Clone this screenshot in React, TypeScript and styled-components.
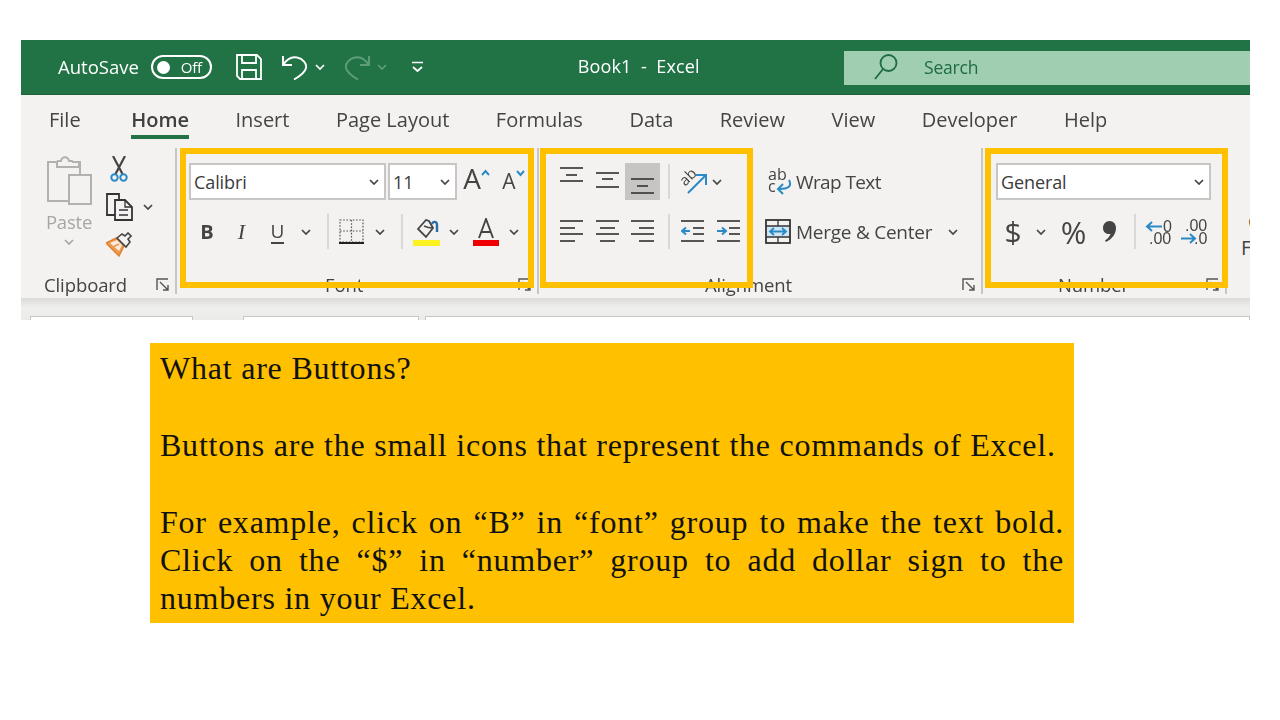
import React from "react";
import styled, { createGlobalStyle } from "styled-components";

const GlobalStyle = createGlobalStyle`
  html, body { margin: 0; padding: 0; background: #fff; }
  body { font-family: "Open Sans", "Liberation Sans", sans-serif; }
`;

const Page = styled.div`
  width: 1280px;
  height: 720px;
  padding: 40px 0 0 21px;
  box-sizing: border-box;
  overflow: hidden;
`;

const Ribbon = styled.div`
  width: 1229px;
  height: 280px;
  display: flex;
  flex-direction: column;
  background: #f3f2f1;
  color: #444;
`;

const TitleBar = styled.div`
  height: 55px;
  flex: none;
  display: flex;
  align-items: center;
  background: #217346;
  color: #fff;
  border-bottom: 1px solid #1b623b;
  box-sizing: border-box;
  filter: blur(0.3px);
`;

const AutoSave = styled.span`
  margin: 0 0 2px 37px;
  font-size: 18.5px;
`;

const Toggle = styled.span`
  margin-left: 12px;
  width: 61px;
  height: 24px;
  box-sizing: border-box;
  border: 2px solid #fff;
  border-radius: 12px;
  display: flex;
  align-items: center;
  font-size: 15px;
  letter-spacing: -0.3px;
  padding-left: 4px;
  gap: 11px;
  &::before {
    content: "";
    width: 13px;
    height: 13px;
    border-radius: 50%;
    background: #fff;
  }
`;

const Slot = styled.span<{ $ml?: number; $w?: number; $bg?: string }>`
  margin-left: ${(p) => p.$ml ?? 0}px;
  ${(p) => (p.$w ? `width: ${p.$w}px;` : "")}
  ${(p) => (p.$bg ? `background: ${p.$bg};` : "")}
  flex: none;
  display: flex;
  align-items: center;
  justify-content: center;
  align-self: stretch;
`;

const BookTitle = styled.span`
  margin: 0 0 2px 154px;
  width: 124px;
  font-size: 18px;
  white-space: pre;
  letter-spacing: 0.1px;
`;

const SearchBox = styled.div`
  margin-left: auto;
  width: 406px;
  height: 34px;
  margin-top: 2px;
  background: #9fceb0;
  color: #1f6b42;
  display: flex;
  align-items: center;
  font-size: 17.5px;
  letter-spacing: -0.2px;
  padding: 0 0 2px 30px;
  box-sizing: border-box;
  gap: 26px;
`;

const TabBar = styled.div`
  height: 50px;
  flex: none;
  display: flex;
  align-items: center;
  padding: 0 0 2px 28px;
  box-sizing: border-box;
  gap: 46.5px;
  font-size: 20px;
  color: #444;
  filter: blur(0.3px);
`;

const Tab = styled.span<{ $active?: boolean }>`
  position: relative;
  ${(p) => (p.$active ? "font-weight: 600; color: #3f3f3f; margin-left: 4px;" : "")}
  ${(p) =>
    p.$active
      ? `&::after {
          content: "";
          position: absolute;
          left: 0;
          right: 0;
          bottom: -6px;
          height: 4px;
          background: #217346;
        }`
      : ""}
`;

const Tools = styled.div`
  height: 153px;
  flex: none;
  display: flex;
  align-items: flex-start;
  padding-top: 3px;
  box-sizing: border-box;
`;

const Group = styled.div<{ $w: number; $pt?: number }>`
  position: relative;
  width: ${(p) => p.$w}px;
  height: 146px;
  flex: none;
  box-sizing: border-box;
  padding-top: ${(p) => p.$pt ?? 15}px;
  border-right: 2px solid #c8c6c4;
  display: flex;
  flex-direction: column;
`;

const Stub = styled.div`
  flex: 1;
  height: 146px;
  padding-top: 61px;
  box-sizing: border-box;
  font-size: 20px;
  line-height: 26px;
  overflow: hidden;
  color: #444;
`;

const StubLine = styled.div<{ $ml: number }>`
  margin-left: ${(p) => p.$ml}px;
`;

const Controls = styled.div`
  flex: 1;
  display: flex;
  flex-direction: column;
  gap: 13px;
  filter: blur(0.3px);
`;

const ToolRow = styled.div`
  height: 37px;
  display: flex;
  align-items: stretch;
`;

const Select = styled.div<{ $ml: number; $w: number }>`
  margin-left: ${(p) => p.$ml}px;
  width: ${(p) => p.$w}px;
  flex: none;
  box-sizing: border-box;
  background: #fff;
  border: 2px solid #c8c6c4;
  display: flex;
  align-items: center;
  justify-content: space-between;
  padding: 0 5px 0 3px;
  font-size: 18px;
  letter-spacing: -0.1px;
  color: #3b3b3b;
`;

const Separator = styled.span<{ $ml: number }>`
  margin: 1px 0 1px ${(p) => p.$ml}px;
  width: 2px;
  flex: none;
  background: #dad8d6;
`;

const BigGlyph = styled.span<{
  $size: number;
  $weight?: number;
  $italic?: boolean;
  $serif?: boolean;
  $under?: boolean;
  $lift?: number;
}>`
  font-size: ${(p) => p.$size}px;
  font-weight: ${(p) => p.$weight ?? 400};
  font-style: ${(p) => (p.$italic ? "italic" : "normal")};
  font-family: ${(p) => (p.$serif ? '"Liberation Serif", serif' : "inherit")};
  margin-bottom: ${(p) => p.$lift ?? 0}px;
  ${(p) => (p.$under ? "border-bottom: 2px solid #444; line-height: 22px;" : "")}
  color: #444;
`;

const ButtonText = styled.span<{ $ml: number; $ls?: number }>`
  margin-left: ${(p) => p.$ml}px;
  flex: none;
  display: flex;
  align-items: center;
  font-size: 19px;
  letter-spacing: ${(p) => p.$ls ?? -0.25}px;
  white-space: nowrap;
`;

const LabelRow = styled.div<{ $pl: number }>`
  height: 20px;
  flex: none;
  display: flex;
  align-items: center;
  justify-content: space-between;
  padding: 0 5px 0 ${(p) => p.$pl}px;
  font-size: 18.5px;
  letter-spacing: -0.1px;
  color: #444;
  filter: blur(0.3px);
`;

const Frame = styled.div<{ $left: number; $w: number }>`
  position: absolute;
  left: ${(p) => p.$left}px;
  top: 0;
  width: ${(p) => p.$w}px;
  height: 140px;
  box-sizing: border-box;
  border: 6px solid #ffc000;
  z-index: 2;
`;

const PasteRow = styled.div`
  flex: 1;
  display: flex;
  align-items: flex-start;
  filter: blur(0.3px);
`;

const PasteColumn = styled.div`
  margin-left: 23px;
  width: 50px;
  display: flex;
  flex-direction: column;
  align-items: center;
  color: #a8a6a4;
  font-size: 18.5px;
  letter-spacing: -0.2px;
  line-height: 22px;
  gap: 6px;
`;

const SmallColumn = styled.div`
  margin-left: 12px;
  display: flex;
  flex-direction: column;
  gap: 11px;
`;

const SmallRow = styled.div`
  display: flex;
  align-items: center;
  gap: 10px;
`;

const Band = styled.div`
  flex: 1;
  display: flex;
  align-items: flex-end;
  padding-left: 9px;
  background: linear-gradient(#dcdbda, #efefee 45%, #ebebea);
`;

const SheetCell = styled.div<{ $ml: number; $w?: number }>`
  margin-left: ${(p) => p.$ml}px;
  ${(p) => (p.$w ? `width: ${p.$w}px;` : "flex: 1;")}
  height: 4px;
  box-sizing: border-box;
  background: #fff;
  border: 1px solid #c8c6c4;
  border-bottom: 0;
`;

const Callout = styled.div`
  margin: 23px 0 0 129px;
  width: 924px;
  height: 280px;
  box-sizing: border-box;
  padding: 6px 10px;
  background: #ffc000;
  color: #111;
  font-family: "Liberation Serif", serif;
  font-size: 32px;
  letter-spacing: 0.78px;
  line-height: 38.4px;
`;

const Para = styled.p<{ $justify?: boolean }>`
  margin: 0 0 38.4px;
  text-align: ${(p) => (p.$justify ? "justify" : "left")};
`;

const IconSvg = styled.svg`
  overflow: visible;
  flex: none;
`;

const Chevron = ({ color = "#444" }: { color?: string }) => (
  <svg width="10" height="6" viewBox="0 0 10 6">
    <path d="M1 1l4 4 4-4" fill="none" stroke={color} strokeWidth="1.7" />
  </svg>
);

const Launcher = () => (
  <svg width="14" height="13" viewBox="0 0 14 13" fill="none" stroke="#555" strokeWidth="1.4">
    <path d="M12 1H1v11" />
    <path d="M4 4l8 8M12 7v5H7" />
  </svg>
);

// horizontal text-align glyphs, each line is [x1, x2, y]
const AlignLines = ({ lines }: { lines: number[][] }) => (
  <svg width="23" height="37" viewBox="0 0 23 37">
    {lines.map((l, i) => (
      <line key={i} x1={l[0]} x2={l[1]} y1={l[2]} y2={l[2]} stroke="#444" strokeWidth="1.8" />
    ))}
  </svg>
);

const IndentIcon = ({ flip }: { flip?: boolean }) => (
  <svg width="23" height="37" viewBox="0 0 23 37">
    <g stroke="#444" strokeWidth="1.8">
      <line x1="0" x2="23" y1="8" y2="8" />
      <line x1="12" x2="23" y1="15" y2="15" />
      <line x1="12" x2="23" y1="21" y2="21" />
      <line x1="0" x2="23" y1="28" y2="28" />
    </g>
    {flip ? (
      <path d="M0 18h8M5 14.5L9 18l-4 3.5" fill="none" stroke="#2b8ac6" strokeWidth="2" />
    ) : (
      <path d="M9 18H1M5 14.5L1 18l4 3.5" fill="none" stroke="#2b8ac6" strokeWidth="2" />
    )}
  </svg>
);

const DecimalIcon = ({ more }: { more?: boolean }) => (
  <IconSvg width="26" height="30" viewBox="0 0 26 30" fontFamily="'Liberation Sans', sans-serif" fontSize="16" fill="#444">
    {more ? (
      <>
        <text x="4" y="13.5">.00</text>
        <text x="13" y="26.5">.0</text>
        <path d="M0 21.5h14M9 17l5 4.5-5 4.5" fill="none" stroke="#2b8ac6" strokeWidth="2" />
      </>
    ) : (
      <>
        <text x="17" y="14.5">0</text>
        <text x="3" y="26.5">.00</text>
        <path d="M16 9.5H1M6 5L1 9.5 6 14" fill="none" stroke="#2b8ac6" strokeWidth="2" />
      </>
    )}
  </IconSvg>
);

const SaveIcon = () => (
  <svg width="26" height="26" viewBox="0 0 26 26" fill="none" stroke="#fff" strokeWidth="1.8">
    <path d="M1 1h20l4 4v20H4l-3-3z" />
    <path d="M6 1v8h14V1M6 25v-9h14v9" />
  </svg>
);

const UndoIcon = () => (
  <svg width="26" height="26" viewBox="0 0 26 26" fill="none" stroke="#fff" strokeWidth="1.9">
    <path d="M1 2v9h9" />
    <path d="M1.5 10.5C5 5 10 2.5 15 3.5c6 1.2 10 6 9 10.5-.8 4-5 7.5-12 11.5" />
  </svg>
);

const RedoIcon = () => (
  <svg width="26" height="26" viewBox="0 0 26 26" fill="none" stroke="#5d9d7b" strokeWidth="1.9">
    <path d="M25 2v9h-9" />
    <path d="M24.5 10.5C21 5 16 2.5 11 3.5c-6 1.2-10 6-9 10.5.8 4 5 7.5 12 11.5" />
  </svg>
);

const CustomizeIcon = () => (
  <svg width="13" height="12" viewBox="0 0 13 12" fill="none" stroke="#fff" strokeWidth="1.7">
    <path d="M1 1.5h11M2 6l4.5 4L11 6" />
  </svg>
);

const SearchIcon = () => (
  <svg width="24" height="26" viewBox="0 0 24 26" fill="none" stroke="#1f6b42" strokeWidth="1.8">
    <circle cx="14.5" cy="9" r="8" />
    <path d="M9 15L1 25" />
  </svg>
);

const ClipboardIcon = () => (
  <svg width="45" height="49" viewBox="0 0 45 49" fill="none" stroke="#b3b1af" strokeWidth="2">
    <path d="M22 45H1V6h9l1-1h3c1-5 7-5 8 0h3l1 1h7v13" />
    <path d="M10 6v5h22V6" />
    <rect x="22" y="19" width="22" height="29" fill="#f3f2f1" />
  </svg>
);

const ScissorsIcon = () => (
  <svg width="18" height="26" viewBox="0 0 18 26" fill="none">
    <path d="M3 0l9.5 18M15 0L5.5 18" stroke="#444" strokeWidth="2.2" />
    <circle cx="4.5" cy="21.5" r="3.2" stroke="#2b8ac6" strokeWidth="2" />
    <circle cx="13.5" cy="21.5" r="3.2" stroke="#2b8ac6" strokeWidth="2" />
  </svg>
);

const CopyIcon = () => (
  <svg width="27" height="28" viewBox="0 0 27 28" fill="none" stroke="#333" strokeWidth="1.8">
    <path d="M9 22H1V1h12v6" />
    <path d="M9 7h10l7 7v13H9z" fill="#f3f2f1" />
    <path d="M19 7v7h7M13 17h9M13 22h9" strokeWidth="1.3" />
  </svg>
);

const BrushIcon = () => (
  <svg width="26" height="25" viewBox="0 0 26 25">
    <path d="M0 11l10-5 8 8-5 10z" fill="#ec9a4e" stroke="#e07f2c" strokeWidth="1.4" />
    <path d="M4 11l7-3 5 5-3 6z" fill="#fbeadb" />
    <path d="M7 15l6-3" stroke="#ec9a4e" strokeWidth="1.6" />
    <path d="M11 6l5-4 3 2 3-3 3 3-3 3 2 3-4 5z" fill="#f3f2f1" stroke="#444" strokeWidth="1.6" />
  </svg>
);

const GrowIcon = ({ up }: { up?: boolean }) => (
  <svg width="9" height="37" viewBox="0 0 9 37">
    <path d={up ? "M1 12l3.5-4L8 12" : "M1 8l3.5 4L8 8"} fill="none" stroke="#2b8ac6" strokeWidth="1.9" />
  </svg>
);

const BorderIcon = () => (
  <svg width="25" height="25" viewBox="0 0 25 25" fill="none" stroke="#555" strokeWidth="1.2" strokeDasharray="1.6 1.6">
    <rect x="1" y="1" width="23" height="22" />
    <path d="M12.5 1v22M1 12h23" />
    <path d="M0 24h25" stroke="#222" strokeWidth="2" strokeDasharray="none" />
  </svg>
);

const FillIcon = () => (
  <svg width="27" height="28" viewBox="0 0 27 28">
    <path d="M5 11l8-9 3 1 4 7-7 9z" fill="none" stroke="#444" strokeWidth="1.8" />
    <path d="M11 8c2 1 6 2 9 2" fill="none" stroke="#444" strokeWidth="1.4" />
    <path d="M19 6c1-3 5-3 5 1v7" fill="none" stroke="#2b6ea6" strokeWidth="2.4" />
    <rect x="0" y="22" width="27" height="6" fill="#fdf221" />
  </svg>
);

const FontColorIcon = () => (
  <svg width="26" height="28" viewBox="0 0 26 28">
    <path d="M6 20L13 1l7 19M8.5 14h9" fill="none" stroke="#444" strokeWidth="1.9" />
    <rect x="0" y="22" width="26" height="6" fill="#ee0000" />
  </svg>
);

const OrientIcon = () => (
  <IconSvg width="28" height="26" viewBox="0 0 28 26" fontFamily="'Open Sans', sans-serif" fontSize="15" fill="#444">
    <text x="8" y="13" textAnchor="middle" transform="rotate(-45 8 8)">ab</text>
    <path d="M8 24L25 7M16 6h10v10" fill="none" stroke="#2b8ac6" strokeWidth="2" />
  </IconSvg>
);

const WrapIcon = () => (
  <IconSvg width="24" height="26" viewBox="0 0 24 26" fontFamily="'Open Sans', sans-serif" fontSize="16" fill="#444">
    <text x="0" y="11">ab</text>
    <text x="0" y="23">c</text>
    <path d="M21 11c3 6 0 9-10 9M15 15l-5 5 5 5" fill="none" stroke="#2b8ac6" strokeWidth="2" />
  </IconSvg>
);

const MergeIcon = () => (
  <svg width="26" height="25" viewBox="0 0 26 25" fill="none">
    <rect x="1" y="1" width="24" height="23" stroke="#333" strokeWidth="1.8" />
    <rect x="2" y="7" width="22" height="11" fill="#cfe6f5" />
    <path d="M1 7h24M1 18h24M13 1v6M13 18v6" stroke="#333" strokeWidth="1.3" />
    <path d="M5 12.5h16M9 9l-4 3.5L9 16M17 9l4 3.5-4 3.5" stroke="#2b8ac6" strokeWidth="1.8" />
  </svg>
);

const CommaIcon = () => (
  <svg width="13" height="21" viewBox="0 0 13 21">
    <path d="M6.5 0c4 0 6.5 3 6.5 7 0 6-4 11-10 14l-1-1.500c3-2 5-4.500 5.500-6.500C3 13.500 0 11 0 7c0-4 3-7 6.500-7z" fill="#444" />
  </svg>
);

const tabs = ["Insert", "Page Layout", "Formulas", "Data", "Review", "View", "Developer", "Help"];

export default function App() {
  return (
    <>
      <GlobalStyle />
      <Page>
        <Ribbon>
          <TitleBar>
            <AutoSave>AutoSave</AutoSave>
            <Toggle>Off</Toggle>
            <Slot $ml={24}><SaveIcon /></Slot>
            <Slot $ml={20}><UndoIcon /></Slot>
            <Slot $ml={7}><Chevron color="#fff" /></Slot>
            <Slot $ml={19}><RedoIcon /></Slot>
            <Slot $ml={7}><Chevron color="#5d9d7b" /></Slot>
            <Slot $ml={24}><CustomizeIcon /></Slot>
            <BookTitle>{"Book1  -  Excel"}</BookTitle>
            <SearchBox>
              <SearchIcon />
              Search
            </SearchBox>
          </TitleBar>

          <TabBar>
            <span>File</span>
            <Tab $active>Home</Tab>
            {tabs.map((t) => (
              <Tab key={t}>{t}</Tab>
            ))}
          </TabBar>

          <Tools>
            <Group $w={156} $pt={8}>
              <PasteRow>
                <PasteColumn>
                  <ClipboardIcon />
                  <span>Paste</span>
                  <Chevron color="#a8a6a4" />
                </PasteColumn>
                <SmallColumn>
                  <SmallRow><Slot $ml={4}><ScissorsIcon /></Slot></SmallRow>
                  <SmallRow><CopyIcon /><Chevron /></SmallRow>
                  <SmallRow><BrushIcon /></SmallRow>
                </SmallColumn>
              </PasteRow>
              <LabelRow $pl={23}>
                <span>Clipboard</span>
                <Launcher />
              </LabelRow>
            </Group>

            <Group $w={362}>
              <Frame $left={3} $w={354} />
              <Controls>
                <ToolRow>
                  <Select $ml={12} $w={197}>Calibri<Chevron /></Select>
                  <Select $ml={2} $w={69}>11<Chevron /></Select>
                  <Slot $ml={6} $w={18}><BigGlyph $size={28} $lift={7}>A</BigGlyph></Slot>
                  <Slot $ml={0} $w={9}><GrowIcon up /></Slot>
                  <Slot $ml={12} $w={14}><BigGlyph $size={21} $lift={2}>A</BigGlyph></Slot>
                  <Slot $w={9}><GrowIcon /></Slot>
                </ToolRow>
                <ToolRow>
                  <Slot $ml={23} $w={14}><BigGlyph $size={20} $weight={700}>B</BigGlyph></Slot>
                  <Slot $ml={21} $w={13}><BigGlyph $size={22} $italic $serif>I</BigGlyph></Slot>
                  <Slot $ml={22} $w={15}><BigGlyph $size={19} $under>U</BigGlyph></Slot>
                  <Slot $ml={16}><Chevron /></Slot>
                  <Separator $ml={16} />
                  <Slot $ml={10}><BorderIcon /></Slot>
                  <Slot $ml={11}><Chevron /></Slot>
                  <Separator $ml={16} />
                  <Slot $ml={10}><FillIcon /></Slot>
                  <Slot $ml={9}><Chevron /></Slot>
                  <Slot $ml={14}><FontColorIcon /></Slot>
                  <Slot $ml={10}><Chevron /></Slot>
                </ToolRow>
              </Controls>
              <LabelRow $pl={148}>
                <span>Font</span>
                <Launcher />
              </LabelRow>
            </Group>

            <Group $w={444}>
              <Frame $left={1} $w={213} />
              <Controls>
                <ToolRow>
                  <Slot $ml={21}><AlignLines lines={[[0, 23, 5], [6, 17, 12], [0, 23, 18]]} /></Slot>
                  <Slot $ml={13}><AlignLines lines={[[0, 23, 10], [6, 17, 16], [0, 23, 24]]} /></Slot>
                  <Slot $ml={6} $w={35} $bg="#c6c5c4"><AlignLines lines={[[0, 23, 16], [6, 17, 23], [0, 23, 30]]} /></Slot>
                  <Separator $ml={8} />
                  <Slot $ml={10}><OrientIcon /></Slot>
                  <Slot $ml={4}><Chevron /></Slot>
                  <Slot $ml={46}><WrapIcon /></Slot>
                  <ButtonText $ml={4} $ls={-0.6}>Wrap Text</ButtonText>
                </ToolRow>
                <ToolRow>
                  <Slot $ml={21}><AlignLines lines={[[0, 23, 8], [0, 15, 15], [0, 23, 21], [0, 15, 28]]} /></Slot>
                  <Slot $ml={13}><AlignLines lines={[[0, 23, 8], [4, 19, 15], [0, 23, 21], [4, 19, 28]]} /></Slot>
                  <Slot $ml={12}><AlignLines lines={[[0, 23, 8], [8, 23, 15], [0, 23, 21], [8, 23, 28]]} /></Slot>
                  <Separator $ml={14} />
                  <Slot $ml={11}><IndentIcon /></Slot>
                  <Slot $ml={13}><IndentIcon flip /></Slot>
                  <Slot $ml={25}><MergeIcon /></Slot>
                  <ButtonText $ml={5}>Merge &amp; Center</ButtonText>
                  <Slot $ml={16}><Chevron /></Slot>
                </ToolRow>
              </Controls>
              <LabelRow $pl={166}>
                <span>Alignment</span>
                <Launcher />
              </LabelRow>
            </Group>

            <Group $w={244}>
              <Frame $left={2} $w={243} />
              <Controls>
                <ToolRow>
                  <Select $ml={13} $w={215}>General<Chevron /></Select>
                </ToolRow>
                <ToolRow>
                  <Slot $ml={23} $w={14}><BigGlyph $size={30}>$</BigGlyph></Slot>
                  <Slot $ml={16}><Chevron /></Slot>
                  <Slot $ml={15} $w={25}><BigGlyph $size={31}>%</BigGlyph></Slot>
                  <Slot $ml={17} $w={13}><CommaIcon /></Slot>
                  <Separator $ml={18} />
                  <Slot $ml={10}><DecimalIcon /></Slot>
                  <Slot $ml={9}><DecimalIcon more /></Slot>
                </ToolRow>
              </Controls>
              <LabelRow $pl={75}>
                <span>Number</span>
                <Launcher />
              </LabelRow>
            </Group>

            <Stub>
              <StubLine $ml={21}>C</StubLine>
              <StubLine $ml={14}>F</StubLine>
            </Stub>
          </Tools>

          <Band>
            <SheetCell $ml={0} $w={163} />
            <SheetCell $ml={50} $w={176} />
            <SheetCell $ml={6} />
          </Band>
        </Ribbon>

        <Callout>
          <Para>What are Buttons?</Para>
          <Para>Buttons are the small icons that represent the commands of Excel.</Para>
          <Para $justify>
            For example, click on “B” in “font” group to make the text bold. Click on the “$” in “number” group to add
            dollar sign to the numbers in your Excel.
          </Para>
        </Callout>
      </Page>
    </>
  );
}
